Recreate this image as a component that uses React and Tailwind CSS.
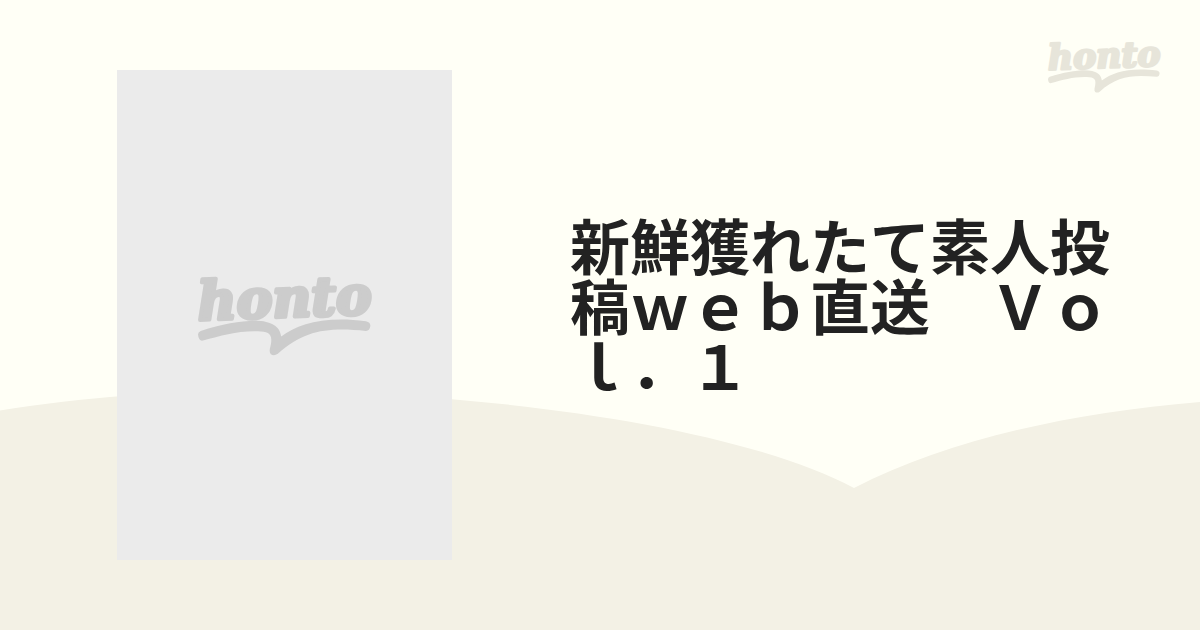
import React from 'react';

const Logo = ({ className }) => (
  <svg viewBox="0 0 520 246" className={`overflow-visible ${className}`} fill="currentColor" role="img" aria-label="honto">
    <text
      x="1"
      y="138"
      transform="rotate(-2 2 138)"
      fontFamily="'DejaVu Serif', serif"
      fontWeight="700"
      fontStyle="italic"
      fontSize="161"
      stroke="currentColor"
      strokeWidth="12"
      strokeLinejoin="round"
    >
      honto
    </text>
    <path d="M8 171C90 145 165 135 205 144C235 152 247 165 250 188C300 150 380 126 505 142Q519 145 518 157Q516 171 505 171C400 160 320 165 240 240Q228 248 219 241Q214 235 216 225C228 180 215 173 180 172C120 170 70 185 15 200Q2 203 0 182Q0 174 8 171Z" />
  </svg>
);

const Wave = () => (
  <svg
    viewBox="0 0 1200 240"
    preserveAspectRatio="none"
    className="absolute inset-x-0 bottom-0 h-60 w-full text-[#f3f1e5]"
    fill="currentColor"
    aria-hidden="true"
  >
    <path d="M0 20.500C85 7 165 1 255 1C480 1 735 35 854 98C950 49 1070 23 1200 12V240H0Z" />
  </svg>
);

const App = () => {
  return (
    <main className="relative flex min-h-screen items-center gap-[118px] bg-[#fffff6] pl-[117px] pr-20">
      <Wave />
      <a href="#" className="absolute right-10 top-10">
        <Logo className="w-28 text-[#e7e5da]" />
      </a>
      <div className="relative flex h-[490px] w-[335px] shrink-0 items-center justify-center bg-[#ebebeb]">
        <Logo className="w-[173px] text-[#cccccc]" />
      </div>
      <h1 className="relative min-w-0 flex-1 pb-[22px] font-['Noto_Sans_CJK_JP',sans-serif] text-6xl leading-none font-bold text-[#222222]">
        新鮮獲れたて素人投稿ｗｅｂ直送　Ｖｏｌ．１
      </h1>
    </main>
  );
};

export default App;
